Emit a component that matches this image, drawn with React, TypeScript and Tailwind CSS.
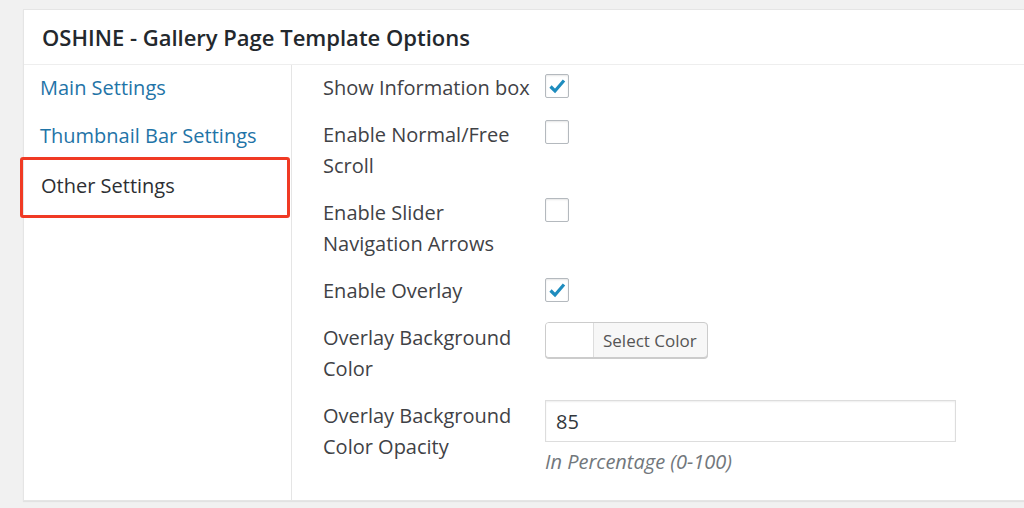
import React from "react";

const Check = ({ checked }: { checked?: boolean }) => (
  <div className="mt-[1px] flex h-[24px] w-[24px] items-center justify-center rounded-[2px] border border-[#b4b9be] bg-white shadow-[inset_0_1px_2px_rgba(0,0,0,0.1)]">
    {checked && (
      <svg width="20" height="20" viewBox="0 0 20 20">
        <path d="M3.5 10.5 L8 15 L17 4.5" fill="none" stroke="#1e8cbe" strokeWidth="3.2" strokeLinecap="butt" strokeLinejoin="miter" />
      </svg>
    )}
  </div>
);

export default function App() {
  return (
    <div
      className="min-h-[508px] overflow-hidden bg-[#f1f1f1] pl-[23px] pt-[9px]"
      style={{ fontFamily: '"Open Sans", "Noto Sans", sans-serif' }}
    >
      <div className="w-[1020px] border border-[#e5e5e5] bg-white shadow-[0_1px_1px_rgba(0,0,0,0.06)]">
        <div className="flex h-[55px] items-center border-b border-[#eeeeee] pl-[18px] text-[22px] font-semibold text-[#23282d]">
          OSHINE - Gallery Page Template Options
        </div>
        <div className="flex">
          <div className="w-[268px] shrink-0 border-r border-[#e5e5e5] bg-white text-[20px]">
            <div className="h-[49px] pl-[16px] pt-[7px] leading-[31px] text-[#1f74a7]">Main Settings</div>
            <div className="h-[49px] pl-[16px] pt-[6px] leading-[31px] text-[#1f74a7]">Thumbnail Bar Settings</div>
            <div className="relative h-[49px] pl-[17px] pt-[7px] leading-[31px] text-[#2d2f33]">
              Other Settings
              <div className="pointer-events-none absolute -left-[4px] -top-[6px] right-[1px] -bottom-[6px] rounded-[3px] border-[3px] border-[#f03a24]" />
            </div>
          </div>
          <div className="flex-1 pb-[25px] pl-[31px] pt-[7px] text-[20px] leading-[31px] text-[#3f4246]">
            <div className="grid grid-cols-[222px_1fr] gap-y-[16px]">
              <div className="whitespace-nowrap">Show Information box</div>
              <div className="pt-[1px]"><Check checked /></div>

              <div className="whitespace-nowrap">Enable Normal/Free<br />Scroll</div>
              <div><Check /></div>

              <div className="whitespace-nowrap">Enable Slider<br />Navigation Arrows</div>
              <div><Check /></div>

              <div className="whitespace-nowrap">Enable Overlay</div>
              <div className="pt-[2px]"><Check checked /></div>

              <div className="whitespace-nowrap">Overlay Background<br />Color</div>
              <div>
                <div className="flex h-[36px] w-[163px] overflow-hidden rounded-[4px] border border-[#cccccc] bg-[#f7f7f7] shadow-[0_1px_0_#cccccc]">
                  <div className="w-[48px] border-r border-[#dddddd] bg-white" />
                  <div className="flex flex-1 items-center pl-[9px] text-[17px] leading-none text-[#555555]">Select Color</div>
                </div>
              </div>

              <div className="whitespace-nowrap">Overlay Background<br />Color Opacity</div>
              <div>
                <div className="flex h-[42px] w-[411px] items-center border border-[#dddddd] bg-white pl-[10px] text-[20px] text-[#32373c] shadow-[inset_0_1px_2px_rgba(0,0,0,0.07)]">
                  85
                </div>
                <div className="mt-[7px] text-[20px] italic leading-[26px] text-[#72777c]">In Percentage (0-100)</div>
              </div>
            </div>
          </div>
        </div>
      </div>
    </div>
  );
}
